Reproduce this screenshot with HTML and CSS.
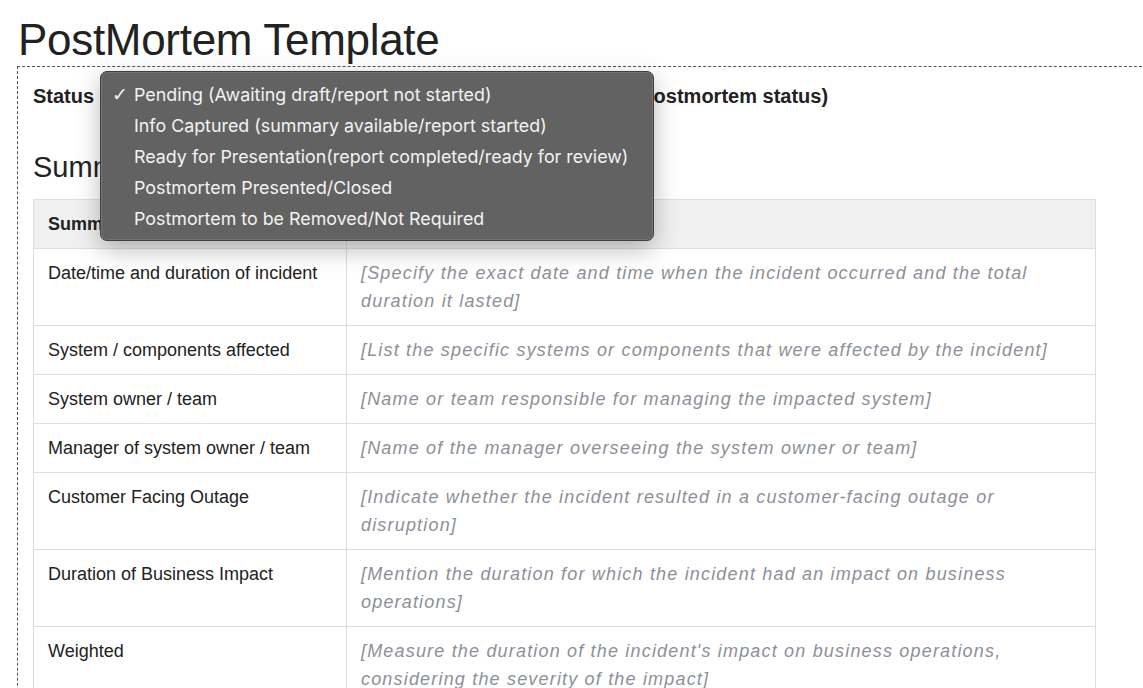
FILE: index.html
```html
<!DOCTYPE html>
<html lang="en">
<head>
<meta charset="utf-8">
<title>PostMortem Template</title>
<link rel="stylesheet" href="styles.css">
</head>
<body>
<h1 class="title">PostMortem Template</h1>
<div class="doc">
  <div class="status-line">
    <span class="status-label">Status</span>
    <span class="status-select">Pending (Awaiting draft/report not started)</span>
    <span class="status-hint">(Select postmortem status)</span>
    <ul class="menu">
      <li class="menu-item checked"><span class="check">✓</span>Pending (Awaiting draft/report not started)</li>
      <li class="menu-item">Info Captured (summary available/report started)</li>
      <li class="menu-item">Ready for Presentation(report completed/ready for review)</li>
      <li class="menu-item">Postmortem Presented/Closed</li>
      <li class="menu-item">Postmortem to be Removed/Not Required</li>
    </ul>
  </div>
  <h2 class="section">Summary</h2>
  <table class="summary">
    <thead>
      <tr><th class="c1">Summary</th><th class="c2">Details</th></tr>
    </thead>
    <tbody>
      <tr><td class="c1">Date/time and duration of incident</td><td class="c2">[Specify the exact date and time when the incident occurred and the total duration it lasted]</td></tr>
      <tr><td class="c1">System / components affected</td><td class="c2">[List the specific systems or components that were affected by the incident]</td></tr>
      <tr><td class="c1">System owner / team</td><td class="c2">[Name or team responsible for managing the impacted system]</td></tr>
      <tr><td class="c1">Manager of system owner / team</td><td class="c2">[Name of the manager overseeing the system owner or team]</td></tr>
      <tr><td class="c1">Customer Facing Outage</td><td class="c2">[Indicate whether the incident resulted in a customer-facing outage or disruption]</td></tr>
      <tr><td class="c1">Duration of Business Impact</td><td class="c2">[Mention the duration for which the incident had an impact on business operations]</td></tr>
      <tr><td class="c1">Weighted</td><td class="c2">[Measure the duration of the incident's impact on business operations, considering the severity of the impact]</td></tr>
    </tbody>
  </table>
</div>
</body>
</html>
```
FILE: styles.css
```css
html, body {
  margin: 0;
  padding: 0;
  overflow: hidden;
  background: #fff;
}
body {
  font-family: "Liberation Sans", Arial, Helvetica, sans-serif;
  color: #222;
  padding: 0 0 0 17px;
}
.title {
  margin: 0;
  padding: 14px 0 0 1px;
  font-size: 44px;
  font-weight: 400;
  line-height: 52px;
  color: #222;
  letter-spacing: -0.3px;
}
.doc {
  border: 1px dashed #555;
  width: 1160px;
  margin-top: 0;
  padding: 14px 0 0 15px;
  box-sizing: border-box;
  min-height: 700px;
}
.status-line {
  position: relative;
  font-size: 20px;
  font-weight: 700;
  line-height: 30px;
  height: 30px;
  white-space: nowrap;
}
.status-label { margin-right: 4px; }
.status-select {
  display: inline-block;
  width: 461px;
  overflow: hidden;
  white-space: nowrap;
  color: #fff;
  font-weight: 400;
  vertical-align: top;
}
.menu {
  position: absolute;
  left: 67px;
  top: -10px;
  width: 552px;
  margin: 0;
  padding: 7px 0 6px 0;
  list-style: none;
  background: #636262;
  border: 1px solid #3f3f3f;
  border-radius: 7px;
  box-shadow: 0 0 0 1px rgba(255,255,255,0.12) inset, 0 8px 24px rgba(0,0,0,0.28);
  font-family: Inter, "Liberation Sans", sans-serif;
  font-weight: 400;
  font-size: 17.85px;
  color: #f2f2f2;
}
.menu-item {
  position: relative;
  height: 31px;
  line-height: 31px;
  padding-left: 33px;
  white-space: nowrap;
}
.check {
  position: absolute;
  left: 11px;
  top: 0;
  font-size: 19px;
  font-family: "DejaVu Sans", sans-serif;
}
.section {
  margin: 38px 0 0 0;
  font-size: 29px;
  font-weight: 400;
  line-height: 36px;
  color: #222;
}
.summary {
  margin-top: 14px;
  width: 1063px;
  border-collapse: collapse;
  font-size: 18px;
  line-height: 28px;
}
.summary th, .summary td {
  border: 1px solid #dedede;
  padding: 10px 14px;
  text-align: left;
  vertical-align: top;
}
.summary th {
  background: #f0f0f0;
  font-weight: 700;
  color: #222;
}
.summary .c1 { width: 284px; }
.summary td.c2 {
  color: #8c9099;
  font-style: italic;
  letter-spacing: 1.18px;
}
```
